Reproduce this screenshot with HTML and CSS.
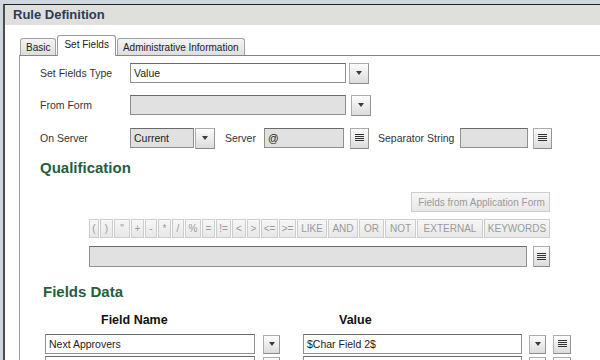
FILE: index.html
```html
<!DOCTYPE html>
<html>
<head>
<meta charset="utf-8">
<link rel="stylesheet" href="styles.css">
</head>
<body>
<div class="window">
  <div class="header">Rule Definition</div>
  <div class="tabs">
    <div class="tab">Basic</div>
    <div class="tab active">Set Fields</div>
    <div class="tab">Administrative Information</div>
  </div>
  <div class="panel">
    <div class="row row-type">
      <span class="lbl">Set Fields Type</span>
      <div class="field w-select">Value</div>
      <button class="btn dd gap3"><span class="tri"></span></button>
    </div>
    <div class="row row-form">
      <span class="lbl">From Form</span>
      <div class="field gray w-select"></div>
      <button class="btn dd gap5"><span class="tri"></span></button>
    </div>
    <div class="row row-server">
      <span class="lbl">On Server</span>
      <div class="field gray w-current">Current</div>
      <button class="btn dd gap1"><span class="tri"></span></button>
      <span class="lbl-inline server-lbl">Server</span>
      <div class="field gray w-server">@</div>
      <button class="btn menu gap6"><svg width="9" height="8" viewBox="0 0 9 8"><path d="M0 0.5H9M0 2.5H9M0 4.5H9M0 6.5H9" stroke="#333" stroke-width="1"/></svg></button>
      <span class="lbl-inline sep-lbl">Separator String</span>
      <div class="field gray w-sep"></div>
      <button class="btn menu gap5"><svg width="9" height="8" viewBox="0 0 9 8"><path d="M0 0.5H9M0 2.5H9M0 4.5H9M0 6.5H9" stroke="#333" stroke-width="1"/></svg></button>
    </div>

    <h2 class="section qual">Qualification</h2>
    <div class="qual-block">
      <div class="app-row"><button class="op-btn app-btn">Fields from Application Form</button></div>
      <div class="ops">
        <button class="op-btn">(</button>
        <button class="op-btn">)</button>
        <button class="op-btn">"</button>
        <button class="op-btn">+</button>
        <button class="op-btn">-</button>
        <button class="op-btn">*</button>
        <button class="op-btn">/</button>
        <button class="op-btn">%</button>
        <button class="op-btn">=</button>
        <button class="op-btn">!=</button>
        <button class="op-btn">&lt;</button>
        <button class="op-btn">&gt;</button>
        <button class="op-btn">&lt;=</button>
        <button class="op-btn">&gt;=</button>
        <button class="op-btn">LIKE</button>
        <button class="op-btn">AND</button>
        <button class="op-btn">OR</button>
        <button class="op-btn">NOT</button>
        <button class="op-btn">EXTERNAL</button>
        <button class="op-btn">KEYWORDS</button>
      </div>
      <div class="expr-row">
        <div class="field gray w-expr"></div>
        <button class="btn menu w17"><svg width="9" height="8" viewBox="0 0 9 8"><path d="M0 0.5H9M0 2.5H9M0 4.5H9M0 6.5H9" stroke="#333" stroke-width="1"/></svg></button>
      </div>
    </div>

    <h2 class="section fdata">Fields Data</h2>
    <div class="col-heads">
      <span class="ch ch-name">Field Name</span>
      <span class="ch ch-value">Value</span>
    </div>
    <div class="data-row">
      <div class="field w-name">Next Approvers</div>
      <button class="btn dd w17 gap8"><span class="tri"></span></button>
      <div class="field w-value">$Char Field 2$</div>
      <button class="btn dd w17 gap7"><span class="tri"></span></button>
      <button class="btn menu w18 gap7"><svg width="9" height="8" viewBox="0 0 9 8"><path d="M0 0.5H9M0 2.5H9M0 4.5H9M0 6.5H9" stroke="#333" stroke-width="1"/></svg></button>
    </div>
    <div class="data-row">
      <div class="field w-name"></div>
      <button class="btn dd w17 gap8"><span class="tri"></span></button>
      <div class="field w-value"></div>
      <button class="btn dd w17 gap7"><span class="tri"></span></button>
      <button class="btn menu w18 gap7"></button>
    </div>
  </div>
</div>
</body>
</html>
```
FILE: styles.css
```css
html, body {
  margin: 0;
  padding: 0;
  height: 360px;
  overflow: hidden;
}
body {
  background: #cfd7de;
  padding-top: 4px;
  box-sizing: border-box;
  font-family: "Liberation Sans", Arial, sans-serif;
  color: #333;
}
.window {
  margin-left: 3px;
  background: #fff;
  border-top: 1px solid #222;
  border-left: 2px solid #4d4d4d;
  height: 355px;
  overflow: hidden;
}
.header {
  height: 20px;
  line-height: 20px;
  background: #dfdfdc;
  padding-left: 8px;
  font-size: 13px;
  font-weight: bold;
  color: #2c3b56;
}
.tabs {
  display: flex;
  align-items: flex-end;
  gap: 1px;
  margin-top: 10px;
  margin-left: 15px;
  height: 20px;
  position: relative;
  z-index: 1;
}
.tab {
  box-sizing: border-box;
  height: 17px;
  line-height: 17px;
  padding: 0 5px;
  font-size: 10px;
  color: #222;
  border: 1px solid #a3a3a3;
  border-bottom: none;
  border-radius: 3px 3px 0 0;
  background: linear-gradient(#f4f4f4, #dedede);
}
.tab.active {
  height: 21px;
  line-height: 18px;
  margin-bottom: -1px;
  background: #fff;
  border-color: #999;
  padding: 0 6px;
}
.panel {
  margin-left: 14px;
  border-top: 1px solid #858585;
  border-left: 1px solid #9a9a9a;
  padding: 7px 0 0 20px;
  height: 320px;
  overflow: hidden;
}
.row {
  display: flex;
  align-items: center;
  height: 20px;
}
.row-type { margin-bottom: 12px; }
.row-form { margin-bottom: 13px; }
.lbl {
  width: 90px;
  font-size: 10.5px;
  color: #333;
}
.lbl-inline {
  font-size: 10.5px;
  color: #333;
}
.server-lbl { margin-left: 10px; width: 39px; }
.sep-lbl { margin-left: 9px; width: 82px; }
.field {
  box-sizing: border-box;
  height: 20px;
  line-height: 18px;
  border: 1px solid #8f8f8f;
  border-top-color: #6a6a6a;
  padding-left: 3px;
  font-size: 10.5px;
  color: #222;
  background: #fff;
  white-space: nowrap;
  overflow: hidden;
}
.field.gray { background: #e1e1e1; }
.w-select { width: 216px; }
.w-current { width: 64px; }
.w-server { width: 80px; }
.w-sep { width: 68px; }
.w-expr { width: 439px; height: 21px; }
.w-name { width: 210px; }
.w-value { width: 219px; }

.btn {
  box-sizing: border-box;
  width: 20px;
  height: 21px;
  padding: 0;
  border: 1px solid #adadad;
  border-bottom-color: #8a8a8a;
  border-right-color: #959595;
  background: linear-gradient(#fcfcfc, #dcdcdc);
  display: flex;
  align-items: center;
  justify-content: center;
}
.btn.menu { width: 19px; }
.btn.w17 { width: 17px; }
.btn.w18 { width: 18px; }
.gap1 { margin-left: 1px; }
.gap3 { margin-left: 3px; }
.gap5 { margin-left: 5px; }
.gap6 { margin-left: 6px; }
.gap7 { margin-left: 7px; }
.gap8 { margin-left: 8px; }
.tri {
  width: 0;
  height: 0;
  border-left: 3.5px solid transparent;
  border-right: 3.5px solid transparent;
  border-top: 4px solid #3a3a3a;
}

.section {
  margin: 0;
  font-size: 15px;
  font-weight: bold;
  color: #1f5f3f;
  line-height: 18px;
}
.qual { margin-top: 11px; }
.qual-block {
  margin-left: 49px;
  width: 461px;
}
.app-row {
  display: flex;
  justify-content: flex-end;
  margin-top: 15px;
}
.op-btn {
  box-sizing: border-box;
  height: 19px;
  padding: 0;
  font-family: "Liberation Sans", Arial, sans-serif;
  font-size: 10px;
  color: #9a9a9a;
  border: 1px solid #cdcdcd;
  background: linear-gradient(#f7f7f7, #e7e7e7);
  white-space: nowrap;
}
.app-btn {
  height: 20px;
  padding: 0 3px 0 5px;
  width: 139px;
}
.ops {
  display: grid;
  grid-template-columns: 10px 13px 16px 13px 12px 13px 12px 16px 13px 15px 14px 13px 17px 17px 30px 30px 25px 31px 66px 66px;
  column-gap: 1px;
  margin-top: 7px;
}
.expr-row {
  display: flex;
  margin-top: 8px;
}
.expr-row .btn { margin-left: 6px; }
.fdata {
  margin-top: 16px;
  margin-left: 3px;
}
.col-heads {
  display: flex;
  margin-top: 11px;
  padding-left: 5px;
  height: 16px;
  line-height: 16px;
}
.ch {
  font-size: 12.5px;
  font-weight: bold;
  color: #111;
}
.ch-name { width: 202px; padding-left: 56px; }
.ch-value { padding-left: 36px; }
.data-row {
  display: flex;
  align-items: center;
  padding-left: 5px;
  margin-top: 6px;
}
.data-row + .data-row { margin-top: 2px; }
.data-row .w-value { margin-left: 23px; }
.data-row .btn { height: 19px; }
```
